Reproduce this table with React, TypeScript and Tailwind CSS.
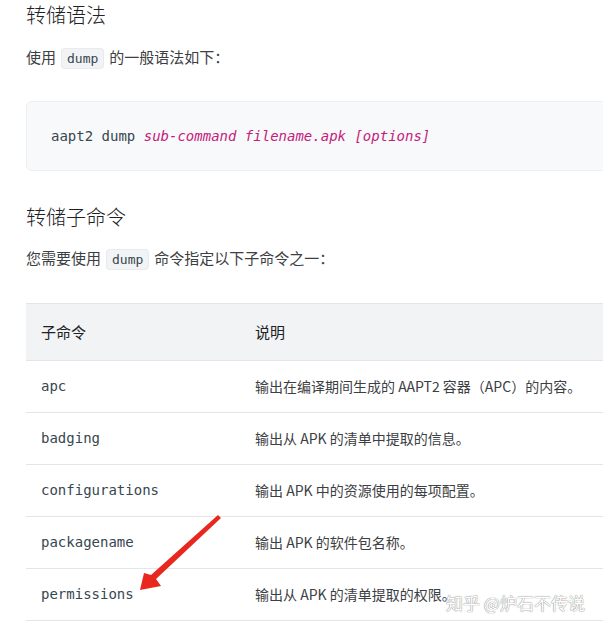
const cjk = { fontFamily: '"Noto Sans CJK SC", "Noto Sans", sans-serif' }
const mono = { fontFamily: '"DejaVu Sans Mono", "Liberation Mono", monospace' }

const rows = [
  ["apc", "输出在编译期间生成的 AAPT2 容器（APC）的内容。"],
  ["badging", "输出从 APK 的清单中提取的信息。"],
  ["configurations", "输出 APK 中的资源使用的每项配置。"],
  ["packagename", "输出 APK 的软件包名称。"],
  ["permissions", "输出从 APK 的清单提取的权限。"],
]

function InlineCode({ children }: { children: string }) {
  return (
    <code
      className="mx-[5px] rounded-[4px] border border-[#e8eaed] bg-[#f1f3f4] px-[5px] py-[2px] text-[13px] text-[#37474f]"
      style={mono}
    >
      {children}
    </code>
  )
}

export default function App() {
  return (
    <div className="relative h-[626px] w-[603px] overflow-hidden bg-white" style={cjk}>
      <div className="ml-[26px] w-[640px]">
        {/* Syntax */}
        <h2 className="text-[20px] leading-[30px] font-light text-[#202124]">转储语法</h2>
        <p className="mt-[15px] text-[15px] leading-[24px] text-[#3c4043]">
          使用<InlineCode>dump</InlineCode>的一般语法如下：
        </p>

        <pre
          className="mt-[30px] rounded-[6px] border border-[#eceef0] bg-[#f8f9fa] px-[24px] py-[24px] text-[14px] leading-[20px] text-[#37474f]"
          style={mono}
        >
          aapt2 dump <span className="italic text-[#c51b7d]">sub-command filename.apk [options]</span>
        </pre>

        {/* Sub-commands */}
        <h2 className="mt-[31px] text-[20px] leading-[30px] font-light text-[#202124]">转储子命令</h2>
        <p className="mt-[14px] text-[15px] leading-[24px] text-[#3c4043]">
          您需要使用<InlineCode>dump</InlineCode>命令指定以下子命令之一：
        </p>

        <table className="mt-[31px] w-full border-collapse text-left text-[14px] text-[#3c4043]">
          <thead>
            <tr className="h-[57px] border-t border-b border-[#e3e5e8] bg-[#f1f3f4]">
              <th className="w-[229px] pl-[15px] text-[15px] font-normal text-[#202124]">子命令</th>
              <th className="text-[15px] font-normal text-[#202124]">说明</th>
            </tr>
          </thead>
          <tbody>
            {rows.map(([cmd, desc]) => (
              <tr key={cmd} className="h-[52px] border-b border-[#e3e5e8]">
                <td className="pl-[15px] text-[14px] text-[#37474f]" style={mono}>
                  {cmd}
                </td>
                <td className="text-[14px]">{desc}</td>
              </tr>
            ))}
          </tbody>
        </table>
      </div>

      {/* Red annotation arrow */}
      <svg className="pointer-events-none absolute left-0 top-0" width="603" height="626">
        <polygon
          points="218,515 221,518 156,579 161,586 140,590 144,573 151,575"
          fill="#e8271f"
        />
      </svg>

      {/* Watermark */}
      <div
        className="pointer-events-none absolute left-[446px] top-[592px] text-[17px] leading-[22px] text-white"
        style={{ ...cjk, textShadow: "0 0 1px #8a8a8a, 0 0 1px #8a8a8a" }}
      >
        知乎 @炉石不传说
      </div>
    </div>
  )
}
